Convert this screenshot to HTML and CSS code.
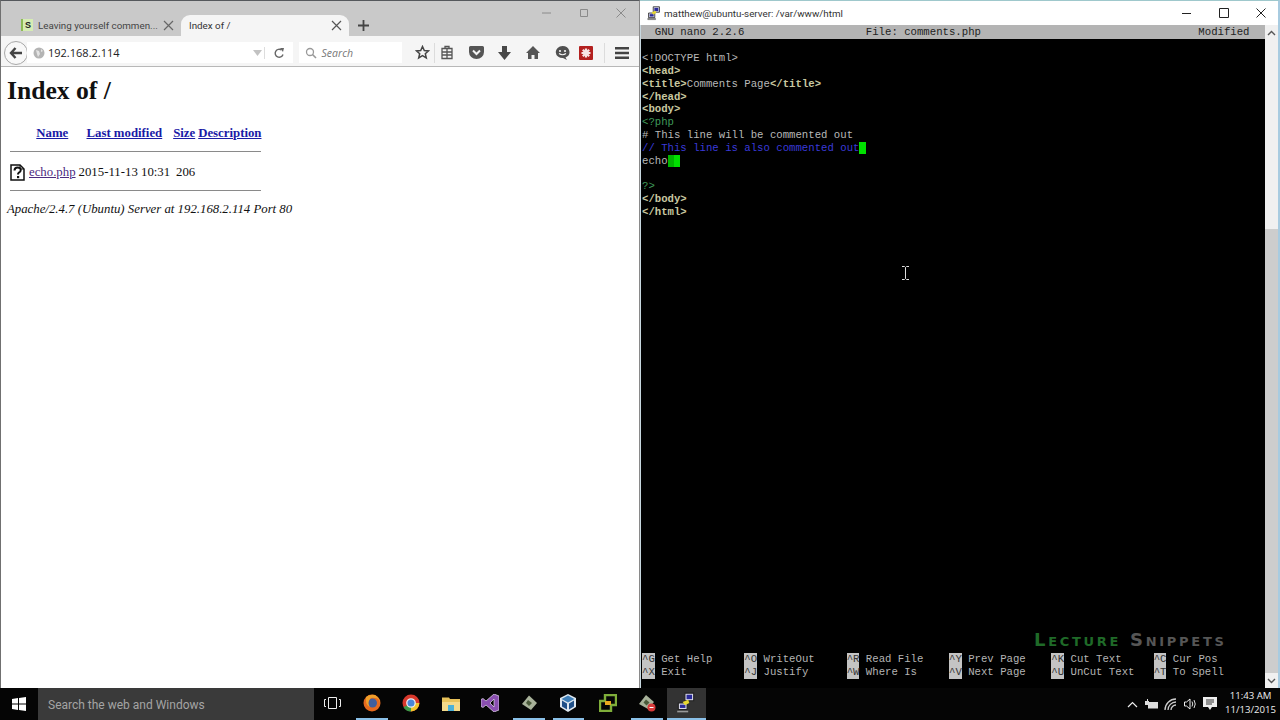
FILE: index.html
```html
<!DOCTYPE html>
<html>
<head>
	<title>Index of /</title>
	<link rel="stylesheet" href="styles.css">
</head>
<body>
	<div class="desktop">
		<div class="browser">
			<div class="tab-strip">
				<div class="tab">
					<span class="favicon">S</span>
					<span class="tab-title">Leaving yourself commen...</span>
					<svg class="tab-close" width="11" height="11" viewBox="0 0 11 11"><path d="M1 1l9 9M10 1l-9 9" stroke="#666" stroke-width="1.2"/></svg>
				</div>
				<div class="tab tab-active">
					<span class="tab-title">Index of /</span>
					<svg class="tab-close" width="11" height="11" viewBox="0 0 11 11"><path d="M1 1l9 9M10 1l-9 9" stroke="#555" stroke-width="1.2"/></svg>
				</div>
				<svg class="new-tab" width="11" height="11" viewBox="0 0 11 11"><path d="M5.5 0v11M0 5.5h11" stroke="#444" stroke-width="1.8"/></svg>
				<div class="window-btns">
					<svg width="12" height="12" viewBox="0 0 12 12"><path d="M1 6h9" stroke="#8a8a8a"/></svg>
					<svg width="12" height="12" viewBox="0 0 12 12"><path d="M2.5 2.500h7v7h-7z" fill="none" stroke="#8a8a8a"/></svg>
					<svg width="12" height="12" viewBox="0 0 12 12"><path d="M1.500 1.500l9 9M10.500 1.500l-9 9" stroke="#8a8a8a"/></svg>
				</div>
			</div>
			<div class="toolbar">
				<div class="back-btn">
					<svg width="14" height="12" viewBox="0 0 14 12"><path d="M6.500 1L2 6l4.500 5M2 6h11" fill="none" stroke="#444" stroke-width="2.400"/></svg>
				</div>
				<div class="url-bar">
					<svg class="globe" width="12" height="12" viewBox="0 0 12 12"><circle cx="6" cy="6" r="5.500" fill="#b4b4b4"/><path d="M3 3l3 1 1 3-2 3-1-3zM8 2l2 2-2 1z" fill="#e4e4e4"/></svg>
					<span class="url-text">192.168.2.114</span>
					<svg class="url-drop" width="9" height="6" viewBox="0 0 9 6"><path d="M0 0h9L4.500 6z" fill="#c2c2c2"/></svg>
					<svg class="url-reload" width="12" height="12" viewBox="0 0 12 12"><path d="M10 7.500A4 4 0 1 1 8.500 3" fill="none" stroke="#666" stroke-width="1.400"/><path d="M7 1l4 0-1 4z" fill="#666"/></svg>
				</div>
				<div class="search-bar">
					<svg width="12" height="12" viewBox="0 0 12 12"><circle cx="5" cy="5" r="3.500" fill="none" stroke="#999" stroke-width="1.300"/><path d="M7.500 7.500l3.500 3.500" stroke="#999" stroke-width="1.600"/></svg>
					<span>Search</span>
				</div>
				<div class="tool-icons">
					<svg class="tool tool-star" width="15" height="15" viewBox="0 0 15 15"><path d="M7.500 1.500l1.800 4 4.200.4-3.200 2.800 1 4.200-3.800-2.200-3.800 2.200 1-4.200L1.500 5.900l4.200-.4z" fill="none" stroke="#444" stroke-width="1.500"/></svg>
					<span class="tool-sep"></span>
					<svg class="tool tool-clip" width="14" height="15" viewBox="0 0 14 15"><path d="M2 3.500h10v10H2zM5 1.500h4v2H5zM2 7h10M2 10h10M7 3.500v10" fill="none" stroke="#555" stroke-width="1.300"/></svg>
					<svg class="tool tool-pocket" width="15" height="13" viewBox="0 0 15 13"><path d="M1.500 0h12A1.500 1.500 0 0 1 15 1.500V6A7.500 7 0 0 1 0 6V1.500A1.500 1.500 0 0 1 1.500 0z" fill="#555"/><path d="M4 4.500l3.500 3.500L11 4.500" fill="none" stroke="#f4f4f4" stroke-width="2"/></svg>
					<svg class="tool" width="13" height="14" viewBox="0 0 13 14"><path d="M4 0h5v6h4l-6.500 8L0 6h4z" fill="#484848"/></svg>
					<svg class="tool" width="14" height="13" viewBox="0 0 14 13"><path d="M7 0L0 7h2v6h3.500V9h3v4H12V7h2z" fill="#555"/></svg>
					<svg class="tool tool-face" width="15" height="14" viewBox="0 0 15 14"><path d="M7.500 0a7 6 0 0 1 3 11.400L12 14l-4-2a7 6 0 0 1-.5-12z" fill="#505050"/><circle cx="5" cy="5" r="1.100" fill="#f4f4f4"/><circle cx="10" cy="5" r="1.100" fill="#f4f4f4"/><path d="M4 7.500q3.500 2.500 7 0" fill="none" stroke="#f4f4f4" stroke-width="1.200"/></svg>
					<svg class="tool tool-red" width="14" height="14" viewBox="0 0 14 14"><rect width="14" height="14" rx="1" fill="#b3201f"/><path d="M7 2.500v9M2.500 7h9M3.800 3.800l6.400 6.400M10.200 3.800l-6.400 6.400" stroke="#f7e6e6" stroke-width="2.200"/></svg>
					<span class="tool-sep"></span>
					<svg class="tool tool-menu" width="14" height="12" viewBox="0 0 14 12"><path d="M0 1.250h14M0 6h14M0 10.750h14" stroke="#444" stroke-width="2.400"/></svg>
				</div>
			</div>
			<div class="page">
				<h1>Index of /</h1>
				<table class="listing">
					<tr>
						<th class="col-icon"></th>
						<th><a href="#">Name</a></th>
						<th><a href="#">Last modified</a></th>
						<th><a href="#">Size</a></th>
						<th><a href="#">Description</a></th>
					</tr>
					<tr><td colspan="5" class="rule-top"><hr></td></tr>
					<tr>
						<td class="col-icon">
							<svg width="15" height="17" viewBox="0 0 15 17"><path d="M1 1h9l4 4v11H1z" fill="#fff" stroke="#111" stroke-width="1.500"/><path d="M10 1v4h4" fill="none" stroke="#111"/><path d="M4.500 6.500q0-3 3.200-3t3 2.800q0 1.700-2 2.500-.7.400-.7 1.700" fill="none" stroke="#111" stroke-width="2"/><path d="M7 12h2.200v2.200H7z" fill="#111"/></svg>
						</td>
						<td><a class="visited" href="#">echo.php</a></td>
						<td>2015-11-13 10:31</td>
						<td class="col-size">206</td>
						<td></td>
					</tr>
					<tr><td colspan="5" class="rule-bottom"><hr></td></tr>
				</table>
				<address>Apache/2.4.7 (Ubuntu) Server at 192.168.2.114 Port 80</address>
			</div>
		</div>

		<div class="terminal-window">
			<div class="term-title">
				<svg class="putty" width="14" height="16" viewBox="0 0 18 18"><path d="M8 1h8v7H8z" fill="#d8d8e8" stroke="#222"/><path d="M9.500 2.500h5v4h-5z" fill="#2a2a9a"/><path d="M2 9h8v6H2z" fill="#d8d8e8" stroke="#222"/><path d="M3.500 10.500h5v3h-5z" fill="#2a2a9a"/><path d="M1 16h10v1.500H1z" fill="#999" stroke="#222" stroke-width=".5"/><path d="M6 8l5-2 1 3-4 2z" fill="#e8d830"/></svg>
				<span class="term-name">matthew@ubuntu-server: /var/www/html</span>
				<div class="window-btns term-btns">
					<svg width="12" height="12" viewBox="0 0 12 12"><path d="M1 6.500h9" stroke="#222"/></svg>
					<svg width="12" height="12" viewBox="0 0 12 12"><path d="M1.500 1.500h9v9h-9z" fill="none" stroke="#222"/></svg>
					<svg width="12" height="12" viewBox="0 0 12 12"><path d="M1.500 1.500l9 9M10.500 1.500l-9 9" stroke="#222"/></svg>
				</div>
			</div>
			<div class="term-body">
				<div class="nano">
<pre class="nano-bar">  GNU nano 2.2.6                   File: comments.php                                  Modified  </pre>
<pre class="nano-text"><span class="plain">&lt;!DOCTYPE html&gt;</span>
<span class="tag">&lt;head&gt;</span>
<span class="tag">&lt;title&gt;</span><span class="plain">Comments Page</span><span class="tag">&lt;/title&gt;</span>
<span class="tag">&lt;/head&gt;</span>
<span class="tag">&lt;body&gt;</span>
<span class="php">&lt;?php</span>
<span class="plain"># This line will be commented out</span>
<span class="comment">// This line is also commented out</span><span class="cursor"> </span>
<span class="plain">echo</span><span class="cursor-dim"> </span><span class="cursor"> </span>

<span class="php">?&gt;</span>
<span class="tag">&lt;/body&gt;</span>
<span class="tag">&lt;/html&gt;</span></pre>
<pre class="nano-help"><span class="key">^G</span> Get Help     <span class="key">^O</span> WriteOut     <span class="key">^R</span> Read File    <span class="key">^Y</span> Prev Page    <span class="key">^K</span> Cut Text     <span class="key">^C</span> Cur Pos
<span class="key">^X</span> Exit         <span class="key">^J</span> Justify      <span class="key">^W</span> Where Is     <span class="key">^V</span> Next Page    <span class="key">^U</span> UnCut Text   <span class="key">^T</span> To Spell</pre>
				</div>
				<div class="scrollbar">
					<div class="scroll-arrow"><svg width="9" height="6" viewBox="0 0 9 6"><path d="M1 5l3.500-3.500L8 5" fill="none" stroke="#555" stroke-width="1.400"/></svg></div>
					<div class="scroll-space"></div>
					<div class="scroll-thumb"></div>
					<div class="scroll-arrow"><svg width="9" height="6" viewBox="0 0 9 6"><path d="M1 1l3.500 3.500L8 1" fill="none" stroke="#555" stroke-width="1.400"/></svg></div>
				</div>
				<svg class="ibeam" width="7" height="14" viewBox="0 0 7 14"><path d="M0 .5h2.500l1 1 1-1H7M3.500 1.500v11M0 13.500h2.500l1-1 1 1H7" fill="none" stroke="#ddd"/></svg>
				<div class="watermark"><span class="wm-green">Lecture</span> <span class="wm-gray">Snippets</span></div>
			</div>
		</div>
	</div>

	<div class="taskbar">
		<div class="start-btn">
			<svg width="14" height="14" viewBox="0 0 14 14"><path d="M0 2l6-.9V6.500H0zM7 1l7-1v6.500H7zM0 7.500h6v5.400l-6-.9zM7 7.500h7V14l-7-1z" fill="#fff"/></svg>
		</div>
		<div class="cortana">Search the web and Windows</div>
		<div class="task-icons">
			<div class="task">
				<svg width="17" height="14" viewBox="0 0 17 14"><path d="M4.500 1.500h8v11h-8zM2 3.500H.5v7H2M15 3.500h1.500v7H15" fill="none" stroke="#eee"/></svg>
			</div>
			<div class="task running">
				<svg width="18" height="18" viewBox="0 0 18 18"><circle cx="9" cy="9" r="8.500" fill="#e66a1f"/><circle cx="9.500" cy="9" r="4.500" fill="#3f5f9f"/><path d="M3 3q4-3 9-2 5 3 5 8-1-5-5-5-4-1-5 1-3 4 0 8-4-2-4-6z" fill="#f0a02a"/></svg>
			</div>
			<div class="task">
				<svg width="18" height="18" viewBox="0 0 18 18"><circle cx="9" cy="9" r="8.500" fill="#d8382c"/><path d="M9 9L1.500 13.300A8.500 8.500 0 0 0 9 17.500z" fill="#3a9a48"/><path d="M9 9h8.400a8.500 8.500 0 0 1-8.400 8.500z" fill="#f2c42c"/><circle cx="9" cy="9" r="4.200" fill="#4a86d8" stroke="#eee" stroke-width="1.300"/></svg>
			</div>
			<div class="task">
				<svg width="18" height="15" viewBox="0 0 18 15"><path d="M0 1.500h7l1 1.500h10v12H0z" fill="#e8c25a"/><path d="M0 6h18v9H0z" fill="#f4d98a"/><path d="M6 9h6v6H6z" fill="#4ab0d8"/></svg>
			</div>
			<div class="task">
				<svg width="18" height="18" viewBox="0 0 18 18"><path d="M13 0l5 2v14l-5 2-8-7-3 2.500-2-1V5.500l2-1L5 7zM13 5l-4 4 4 4z" fill="#8a4fb0" stroke="#e8dff0" stroke-width=".7"/></svg>
			</div>
			<div class="task running">
				<svg width="18" height="18" viewBox="0 0 18 18"><path d="M9 1.500L17 9l-6 7-9-6z" fill="#a8b29a"/><path d="M8 6l4 3-3 3-3-3z" fill="#4a5a3a"/></svg>
			</div>
			<div class="task running">
				<svg width="18" height="18" viewBox="0 0 18 18"><path d="M9 0l8 4v9l-8 5-8-5V4z" fill="#dfe8f0"/><path d="M9 8.500L2.500 5 9 1.500 15.500 5z" fill="#3f7fb8"/><path d="M3 6.500l5 3v6l-5-3zM15 6.500l-5 3v6l5-3z" fill="#1f4f88"/></svg>
			</div>
			<div class="task">
				<svg width="18" height="18" viewBox="0 0 18 18"><path d="M6 1h11v10h-5v6H1V7h5z" fill="none" stroke="#7fae3a" stroke-width="2.400"/><path d="M6 7h6v4H6z" fill="#e8a81f"/></svg>
			</div>
			<div class="task running">
				<svg width="18" height="18" viewBox="0 0 18 18"><path d="M8 1l8 7-6 7-9-5z" fill="#a8b29a"/><path d="M8 5.500l3.500 3-3 3-3-3z" fill="#4a5a3a"/><circle cx="13.500" cy="13.500" r="4" fill="#d83a3a"/><path d="M11.500 13.500h4" stroke="#fff"/></svg>
			</div>
			<div class="task running active">
				<svg width="20" height="22" viewBox="0 0 18 20"><path d="M8 1h8v7H8z" fill="#d8d8e8" stroke="#222"/><path d="M9.500 2.500h5v4h-5z" fill="#2a2a9a"/><path d="M2 10h8v6H2z" fill="#d8d8e8" stroke="#222"/><path d="M3.500 11.500h5v3h-5z" fill="#2a2a9a"/><path d="M1 17h10v1.500H1z" fill="#999"/><path d="M6 9l5-2 1 3-4 2z" fill="#e8d830"/></svg>
			</div>
		</div>
		<div class="tray">
			<svg width="11" height="7" viewBox="0 0 11 7"><path d="M1 6l4.500-4.500L10 6" fill="none" stroke="#eee" stroke-width="1.200"/></svg>
			<svg width="13" height="10" viewBox="0 0 13 10"><path d="M0 2h2V0h1v2h1v1h9v6.500H3V6H0z" fill="#ddd"/></svg>
			<svg width="13" height="12" viewBox="0 0 13 12"><path d="M1 12A11 11 0 0 1 12 1M4 12a8 8 0 0 1 8-8M7 12a5 5 0 0 1 5-5" fill="none" stroke="#ccc" stroke-width="1.300"/></svg>
			<svg width="13" height="12" viewBox="0 0 13 12"><path d="M.5 4h2L6 1v10L2.500 8h-2z" fill="none" stroke="#eee"/><path d="M8 3.500q1.500 2.500 0 5M10 2q2.500 4 0 8" fill="none" stroke="#ddd"/></svg>
			<svg width="14" height="14" viewBox="0 0 14 14"><path d="M0 0h14v10H9l-2 3-2-3H0z" fill="#eee"/><path d="M3 3h8M3 5h8M3 7h6" stroke="#333"/></svg>
			<div class="clock">
				<span>11:43 AM</span>
				<span>11/13/2015</span>
			</div>
		</div>
	</div>
</body>
</html>
```

FILE: styles.css
```css
:root {
  --strip-color: #c9c9c9;
  --toolbar-color: #f5f5f5;
  --term-bar: #b4b4b4;
  --task-color: #050505;
}

html, body {
  margin: 0;
  padding: 0;
  width: 1280px;
  height: 720px;
  overflow: hidden;
  background-color: var(--task-color);
}

pre {
  margin: 0;
}

.desktop {
  display: flex;
  height: 688px;
}

/* browser window */

.browser {
  width: 640px;
  display: flex;
  flex-direction: column;
  box-sizing: border-box;
  border-left: 1px solid #707070;
  border-right: 1px solid #8a8a8a;
  border-top: 1px solid #55585c;
  background-color: white;
}

.tab-strip {
  height: 35px;
  display: flex;
  align-items: flex-end;
  padding-left: 12px;
  background-color: var(--strip-color);
  font-family: Roboto, sans-serif;
  font-size: 9.800px;
  color: #444;
  position: relative;
}

.tab {
  width: 168px;
  height: 21px;
  box-sizing: border-box;
  display: flex;
  align-items: center;
  padding: 0 6px 1px 8px;
}

.tab-active {
  background-color: var(--toolbar-color);
  border-radius: 9px 9px 0 0;
  color: #333;
}

.tab-title {
  flex: 1;
  white-space: nowrap;
}

.tab-close {
  margin-right: 1px;
  flex: none;
}

.favicon {
  width: 12px;
  height: 12px;
  margin-right: 5px;
  flex: none;
  box-sizing: border-box;
  background-color: #d6ecb4;
  border-left: 2px solid #8dbb55;
  color: #222;
  font-family: "Liberation Sans", sans-serif;
  font-size: 9px;
  font-weight: bold;
  line-height: 12px;
  text-align: center;
}

.new-tab {
  margin: 0 0 5px 9px;
}

.window-btns {
  display: flex;
  gap: 25px;
  position: absolute;
  right: 12px;
  top: 6px;
}

.toolbar {
  height: 31px;
  box-sizing: border-box;
  display: flex;
  align-items: center;
  padding: 3px 10px 0 3px;
  background-color: var(--toolbar-color);
  border-bottom: 1px solid #b8b8b8;
}

.back-btn {
  width: 24px;
  height: 24px;
  box-sizing: border-box;
  border: 1px solid #a8a8a8;
  border-radius: 50%;
  background-color: #f8f8f8;
  display: flex;
  align-items: center;
  justify-content: center;
  flex: none;
}

.url-bar {
  width: 278px;
  height: 21px;
  margin-left: -1px;
  display: flex;
  align-items: center;
  background-color: white;
  font-family: "Open Sans", sans-serif;
  font-size: 11px;
  color: #222;
}

.globe {
  margin: 0 3px 0 6px;
}

.url-text {
  flex: 1;
}

.url-drop {
  margin-right: 2px;
}

.url-reload {
  border-left: 1px solid #ddd;
  padding: 0 8px;
}

.search-bar {
  width: 108px;
  height: 21px;
  margin-left: 6px;
  box-sizing: border-box;
  padding-left: 6px;
  display: flex;
  align-items: center;
  gap: 5px;
  background-color: white;
  font-family: "Open Sans", sans-serif;
  font-size: 10.500px;
  font-style: italic;
  color: #777;
}

.tool-icons {
  display: flex;
  align-items: center;
  margin-left: 13px;
}

.tool {
  margin-right: 15px;
  flex: none;
}

.tool-star {
  margin-right: 4px;
}

.tool-sep {
  width: 1px;
  height: 20px;
  margin-right: 5px;
  flex: none;
  background-color: #dcdcdc;
}

.tool-pocket {
  margin-right: 14px;
}

.tool-face {
  margin-right: 9px;
}

.tool-red {
  margin-right: 11px;
}

.tool-menu {
  margin: 0 0 0 5px;
}

/* directory listing */

.page {
  flex: 1;
  padding: 0 0 0 6px;
  font-family: "Liberation Serif", serif;
  font-size: 12.800px;
  color: #111;
}

.page h1 {
  margin: 12px 0 0 0;
  font-size: 25.600px;
  line-height: 24px;
}

.page a {
  color: #1a1aa6;
}

.page a.visited {
  color: #4c2a80;
}

.listing {
  margin-top: 21px;
  border-collapse: collapse;
  font-size: 12.800px;
}

.listing th, .listing td {
  padding: 0 0 0 3px;
  white-space: nowrap;
}

.listing th {
  height: 18px;
  font-weight: bold;
  text-align: center;
}

.listing td {
  height: 24px;
  text-align: left;
}

.listing .rule-top {
  height: 18px;
}

.listing .rule-bottom {
  height: 12px;
}

.rule-top hr, .rule-bottom hr {
  margin: 0;
  height: 1px;
  border: none;
  background-color: #8a8a8a;
}

.listing .col-icon {
  width: 16px;
  line-height: 0;
}

.listing .col-size {
  text-align: right;
}

address {
  margin-top: 6px;
  font-size: 12.800px;
  font-style: italic;
}

/* terminal window */

.terminal-window {
  width: 640px;
  display: flex;
  flex-direction: column;
  box-sizing: border-box;
  border-top: 1px solid #9fc8cc;
  border-right: 2px solid #a8cbe0;
  background-color: white;
}

.term-title {
  height: 24px;
  display: flex;
  align-items: center;
  position: relative;
  padding-left: 7px;
  font-family: Roboto, sans-serif;
  font-size: 9.800px;
  color: #333;
}

.putty {
  margin-right: 3px;
}

.term-btns {
  top: 6px;
  right: 11px;
}

.term-body {
  flex: 1;
  display: flex;
  position: relative;
  min-height: 0;
}

.nano {
  width: 625px;
  box-sizing: border-box;
  padding-left: 1px;
  border-left: 1px solid #c8d8e0;
  display: flex;
  flex-direction: column;
  background-color: black;
  font-family: "Liberation Mono", monospace;
  font-size: 10.667px;
  line-height: 12.800px;
  color: #b4b4b4;
}

.nano pre {
  font: inherit;
}

.nano-bar {
  background-color: var(--term-bar);
  color: #222;
  margin-left: -1px;
  padding-left: 1px;
  height: 14px;
  line-height: 14px !important;
}

.nano-text {
  flex: 1;
  padding-top: 13.200px;
}

.nano-help {
  margin-bottom: 9px;
}

.plain {
  color: #b8b8b8;
}

.tag {
  color: #c8c8a0;
  font-weight: bold;
}

.php {
  color: #3f9a5a;
}

.comment {
  color: #3a3ad8;
}

.cursor {
  background-color: #00e000;
}

.cursor-dim {
  background-color: #00b400;
}

.key {
  display: inline-block;
  height: 12.800px;
  background-color: #c4c4c4;
  color: #333;
}

.scrollbar {
  flex: 1;
  display: flex;
  flex-direction: column;
  background-color: #f0f0f0;
}

.scroll-arrow {
  height: 15px;
  display: flex;
  align-items: center;
  justify-content: center;
}

.scroll-space {
  height: 189px;
}

.scroll-thumb {
  flex: 1;
  background-color: #cdcdcd;
}

.ibeam {
  position: absolute;
  left: 262px;
  top: 241px;
}

.watermark {
  position: absolute;
  left: 394px;
  top: 603px;
  font-family: "DejaVu Sans", sans-serif;
  font-size: 18px;
  font-weight: bold;
  font-variant: small-caps;
  letter-spacing: 2.700px;
  line-height: 24px;
  white-space: nowrap;
}

.wm-green {
  color: #1f6a28;
}

.wm-gray {
  color: #565656;
}

/* taskbar */

.taskbar {
  height: 32px;
  display: flex;
  align-items: center;
  background-color: var(--task-color);
}

.start-btn {
  width: 38px;
  height: 100%;
  display: flex;
  align-items: center;
  justify-content: center;
}

.cortana {
  width: 276px;
  height: 100%;
  box-sizing: border-box;
  padding: 1px 0 0 10px;
  display: flex;
  align-items: center;
  background-color: #3a3a3a;
  font-family: Roboto, sans-serif;
  font-size: 12px;
  color: #a4a4a4;
}

.task-icons {
  display: flex;
  height: 100%;
  margin-left: -1px;
}

.task {
  width: 31.300px;
  height: 100%;
  margin: 0 4px;
  box-sizing: border-box;
  display: flex;
  align-items: center;
  justify-content: center;
  border-bottom: 2px solid transparent;
}

.task.running {
  border-bottom-color: #8ac0e8;
}

.task.active {
  width: 39.300px;
  margin: 0;
  background-color: #333;
}

.tray {
  margin-left: auto;
  display: flex;
  align-items: center;
  gap: 6.500px;
  padding-right: 4px;
}

.clock {
  margin-left: 1.500px;
  padding-bottom: 2px;
  display: flex;
  flex-direction: column;
  align-items: center;
  font-family: "Open Sans", sans-serif;
  font-size: 9.600px;
  line-height: 14px;
  color: #eee;
}
```
